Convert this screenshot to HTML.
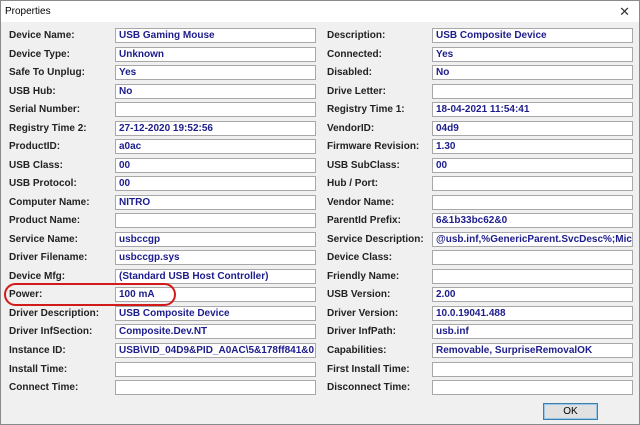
<!DOCTYPE html>
<html><head><style>
body{margin:0;width:640px;height:425px;overflow:hidden;background:#f0f0f0;font-family:"Liberation Sans",Arial,sans-serif;position:relative}
.win{position:absolute;left:0;top:0;width:638px;height:423px;border:1px solid #8a8a8a;background:#f0f0f0}
.title{position:absolute;left:0;top:0;width:638px;height:21px;background:#fff;font-size:10px;color:#000;line-height:21px;padding-left:4px;box-sizing:border-box}
.x{position:absolute;right:9px;top:0;font-size:13px;color:#333;line-height:21px}
.l{position:absolute;font-size:10px;font-weight:bold;color:#222;white-space:nowrap}
.b{position:absolute;width:196px;height:13px;background:#fff;border:1px solid #a8a8a8;font-size:10px;font-weight:bold;color:#1c1c8c;line-height:13px;padding-left:3px;white-space:nowrap;overflow:hidden}
.ok{position:absolute;left:543px;top:403px;width:53px;height:15px;border:1px solid #3c7fb1;background:#e1e1e1;font-size:10px;text-align:center;line-height:15px;box-shadow:inset 0 0 0 1px #9cc6e6}
.ell{position:absolute;left:4px;top:283px;width:168px;height:19px;border:2px solid #d21a1a;border-radius:12px}
</style></head><body>
<div class="win">
<div class="title">Properties<span class="x">✕</span></div>
</div>
<div id="c"></div>
<script>
var L=[["Device Name:","USB Gaming Mouse"],["Device Type:","Unknown"],["Safe To Unplug:","Yes"],["USB Hub:","No"],["Serial Number:",""],["Registry Time 2:","27-12-2020 19:52:56"],["ProductID:","a0ac"],["USB Class:","00"],["USB Protocol:","00"],["Computer Name:","NITRO"],["Product Name:",""],["Service Name:","usbccgp"],["Driver Filename:","usbccgp.sys"],["Device Mfg:","(Standard USB Host Controller)"],["Power:","100 mA"],["Driver Description:","USB Composite Device"],["Driver InfSection:","Composite.Dev.NT"],["Instance ID:","USB\\VID_04D9&PID_A0AC\\5&178ff841&0"],["Install Time:",""],["Connect Time:",""]];
var R=[["Description:","USB Composite Device"],["Connected:","Yes"],["Disabled:","No"],["Drive Letter:",""],["Registry Time 1:","18-04-2021 11:54:41"],["VendorID:","04d9"],["Firmware Revision:","1.30"],["USB SubClass:","00"],["Hub / Port:",""],["Vendor Name:",""],["ParentId Prefix:","6&1b33bc62&0"],["Service Description:","@usb.inf,%GenericParent.SvcDesc%;Mic"],["Device Class:",""],["Friendly Name:",""],["USB Version:","2.00"],["Driver Version:","10.0.19041.488"],["Driver InfPath:","usb.inf"],["Capabilities:","Removable, SurpriseRemovalOK"],["First Install Time:",""],["Disconnect Time:",""]];
var h="";
function esc(s){return s.replace(/&/g,"&amp;").replace(/</g,"&lt;")}
for(var i=0;i<20;i++){var y=Math.round(28+i*18.53);
h+='<div class="l" style="left:9px;top:'+(y+2)+'px">'+esc(L[i][0])+'</div><div class="b" style="left:115px;top:'+y+'px">'+esc(L[i][1])+'</div>';
h+='<div class="l" style="left:327px;top:'+(y+2)+'px">'+esc(R[i][0])+'</div><div class="b" style="left:432px;top:'+y+'px">'+esc(R[i][1])+'</div>';}
h+='<div class="ell"></div><div class="ok">OK</div>';
document.getElementById("c").innerHTML=h;
</script>
</body></html>
